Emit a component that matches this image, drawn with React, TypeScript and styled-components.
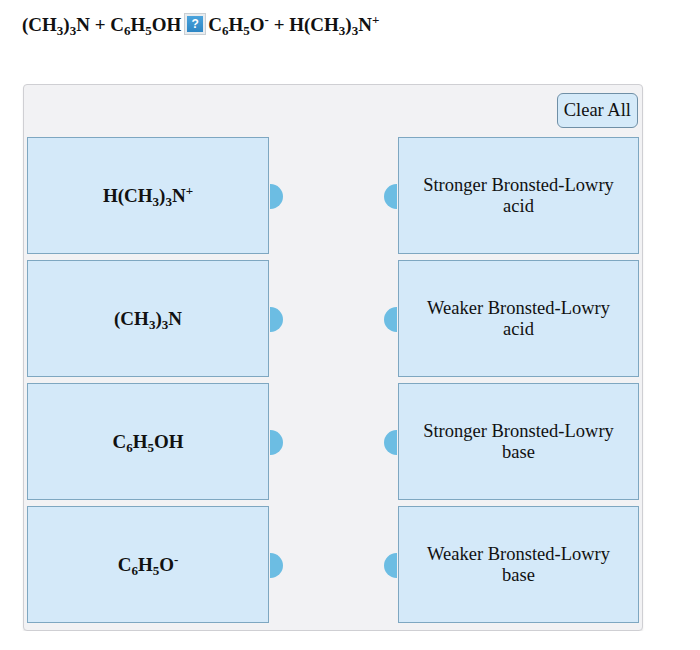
import React from "react";
import styled, { createGlobalStyle } from "styled-components";

const Global = createGlobalStyle`
  html, body { margin: 0; padding: 0; background: #ffffff; }
  body { font-family: "Liberation Serif", "Times New Roman", serif; color: #111; }
`;

const Page = styled.div`
  width: 700px;
  padding: 10px 0 0 22px;
  box-sizing: border-box;
`;

const Equation = styled.div`
  font-weight: bold;
  font-size: 19px;
  line-height: 30px;
  height: 30px;
  white-space: nowrap;
  sub { font-size: 13px; vertical-align: -4px; line-height: 0; }
  sup { font-size: 13px; vertical-align: 7px; line-height: 0; }
`;

const HelpIcon = styled.span`
  display: inline-flex;
  align-items: center;
  justify-content: center;
  vertical-align: 3px;
  width: 22px;
  height: 22px;
  margin: 0 2px 0 3px;
  box-sizing: border-box;
  background: #e8ecef;
  border: 1px solid #c9cfd4;
  &::before {
    content: "?";
    display: flex;
    align-items: center;
    justify-content: center;
    width: 16px;
    height: 16px;
    background: linear-gradient(#4aa3dc, #2d86c4);
    color: #fff;
    font-family: "Liberation Sans", Arial, sans-serif;
    font-size: 12px;
    line-height: 16px;
    font-weight: bold;
  }
`;

const Panel = styled.div`
  margin: 44px 0 0 1px;
  width: 620px;
  box-sizing: border-box;
  background: #f2f2f4;
  border: 1px solid #cfcfd3;
  border-radius: 4px;
  box-shadow: 0 2px 2px rgba(0, 0, 0, 0.08);
  padding: 8px 3px 7px 3px;
  display: flex;
  flex-direction: column;
`;

const Header = styled.div`
  display: flex;
  justify-content: flex-end;
  margin-bottom: 9px;
  padding-right: 1px;
`;

const ClearButton = styled.button`
  height: 35px;
  padding: 0 6px;
  font-family: "Liberation Serif", "Times New Roman", serif;
  font-size: 18.5px;
  color: #111;
  background: #d5eaf9;
  border: 1px solid #6f8fa6;
  border-radius: 6px;
`;

const Grid = styled.div`
  display: grid;
  grid-template-columns: 242px 241px;
  justify-content: space-between;
  row-gap: 6px;
`;

const Box = styled.div<{ $side: "left" | "right" }>`
  position: relative;
  height: 117px;
  box-sizing: border-box;
  background: #d4e9f9;
  border: 1px solid #7ea7c1;
  display: flex;
  align-items: center;
  justify-content: center;
  text-align: center;
  &::after {
    content: "";
    position: absolute;
    top: 46px;
    width: 13px;
    height: 25px;
    background: #6cbde3;
    ${(p) =>
      p.$side === "left"
        ? "right: -15px; border-radius: 0 13px 13px 0;"
        : "left: -15px; border-radius: 13px 0 0 13px;"}
  }
`;

const Formula = styled.div`
  font-weight: bold;
  font-size: 19px;
  sub { font-size: 13px; vertical-align: -4px; line-height: 0; }
  sup { font-size: 13px; vertical-align: 7px; line-height: 0; }
`;

const Label = styled.div`
  font-size: 18.5px;
  line-height: 21px;
  padding: 0 8px;
`;

const left = [
  <>H(CH<sub>3</sub>)<sub>3</sub>N<sup>+</sup></>,
  <>(CH<sub>3</sub>)<sub>3</sub>N</>,
  <>C<sub>6</sub>H<sub>5</sub>OH</>,
  <>C<sub>6</sub>H<sub>5</sub>O<sup>-</sup></>,
];

const right = [
  ["Stronger Bronsted-Lowry", "acid"],
  ["Weaker Bronsted-Lowry", "acid"],
  ["Stronger Bronsted-Lowry", "base"],
  ["Weaker Bronsted-Lowry", "base"],
];

export default function App() {
  return (
    <Page>
      <Global />
      <Equation>
        (CH<sub>3</sub>)<sub>3</sub>N + C<sub>6</sub>H<sub>5</sub>OH
        <HelpIcon />
        C<sub>6</sub>H<sub>5</sub>O<sup>-</sup> + H(CH<sub>3</sub>)<sub>3</sub>N<sup>+</sup>
      </Equation>
      <Panel>
        <Header>
          <ClearButton>Clear All</ClearButton>
        </Header>
        <Grid>
          {left.map((f, i) => (
            <React.Fragment key={i}>
              <Box $side="left">
                <Formula>{f}</Formula>
              </Box>
              <Box $side="right">
                <Label>
                  {right[i][0]}
                  <br />
                  {right[i][1]}
                </Label>
              </Box>
            </React.Fragment>
          ))}
        </Grid>
      </Panel>
    </Page>
  );
}
